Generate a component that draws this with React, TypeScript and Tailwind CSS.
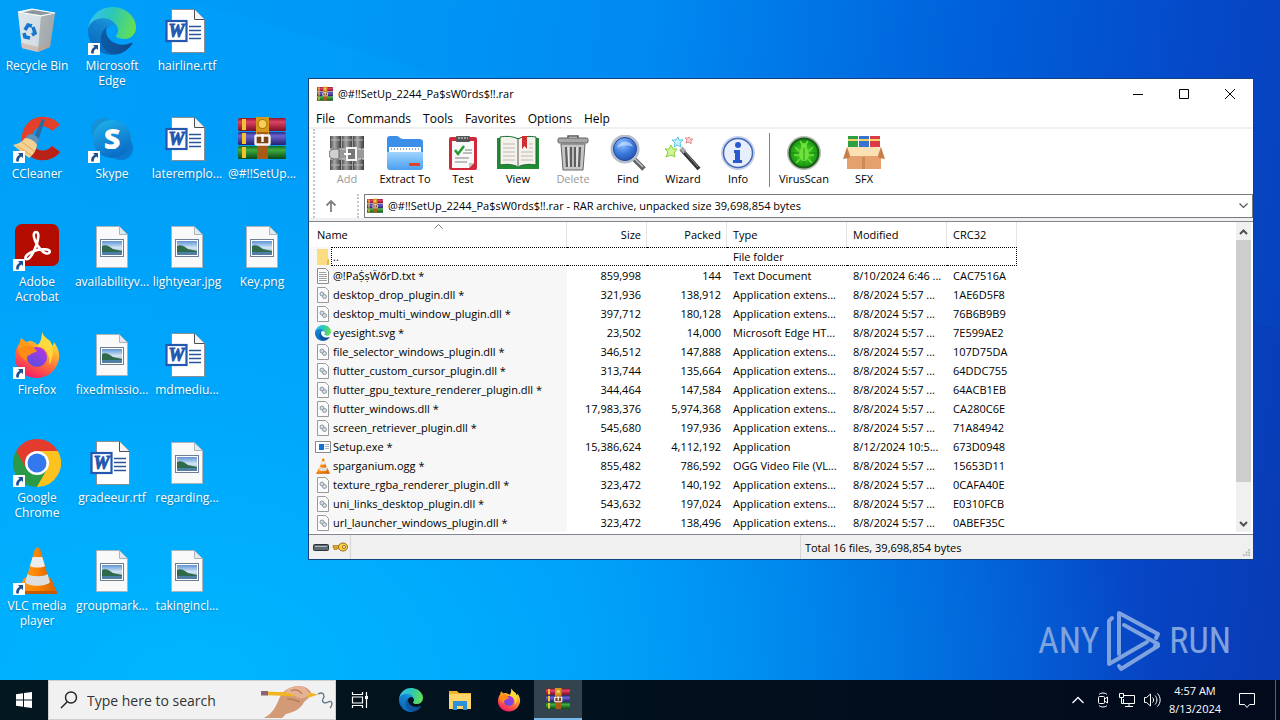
import { useState } from "react";
import type { ReactNode } from "react";

type IconProps = { className?: string };

// gradients shared by the icons below
function Gradients() {
  return (
    <svg className="absolute size-0" aria-hidden="true">
      <defs>
        <linearGradient id="edge-dark" x1="0.2" y1="0.5" x2="1" y2="0.5">
          <stop offset="0" stopColor="#0c59a4" />
          <stop offset="1" stopColor="#114a8b" />
        </linearGradient>
        <linearGradient id="edge-mid" x1="0.8" y1="0" x2="0.3" y2="1">
          <stop offset="0" stopColor="#1b9de2" />
          <stop offset="0.4" stopColor="#1482cf" />
          <stop offset="1" stopColor="#0767bb" />
        </linearGradient>
        <linearGradient id="edge-top" x1="0" y1="0.4" x2="1" y2="0.6">
          <stop offset="0" stopColor="#35c1f1" />
          <stop offset="0.45" stopColor="#2cc7b8" />
          <stop offset="1" stopColor="#66e04f" />
        </linearGradient>
        <linearGradient id="fox-body" x1="0.8" y1="0" x2="0.3" y2="1">
          <stop offset="0" stopColor="#fff44f" />
          <stop offset="0.3" stopColor="#ffbd30" />
          <stop offset="0.6" stopColor="#ff7139" />
          <stop offset="1" stopColor="#f5156c" />
        </linearGradient>
        <linearGradient id="fox-globe" x1="0.8" y1="0" x2="0.3" y2="1">
          <stop offset="0" stopColor="#b833e1" />
          <stop offset="1" stopColor="#5b4fe0" />
        </linearGradient>
        <linearGradient id="cone" x1="0" y1="0" x2="1" y2="0">
          <stop offset="0" stopColor="#ff9a1f" />
          <stop offset="0.5" stopColor="#fb8400" />
          <stop offset="1" stopColor="#d96200" />
        </linearGradient>
        <linearGradient id="book-red" x1="0" y1="0" x2="0" y2="1">
          <stop offset="0" stopColor="#8e1530" />
          <stop offset="0.3" stopColor="#e04464" />
          <stop offset="1" stopColor="#7b0f26" />
        </linearGradient>
        <linearGradient id="book-blue" x1="0" y1="0" x2="0" y2="1">
          <stop offset="0" stopColor="#2d2a86" />
          <stop offset="0.3" stopColor="#6a64cf" />
          <stop offset="1" stopColor="#25206d" />
        </linearGradient>
        <linearGradient id="book-green" x1="0" y1="0" x2="0" y2="1">
          <stop offset="0" stopColor="#0f6a28" />
          <stop offset="0.3" stopColor="#3fae3e" />
          <stop offset="1" stopColor="#07491a" />
        </linearGradient>
        <linearGradient id="book-gray" x1="0" y1="0" x2="1" y2="0">
          <stop offset="0" stopColor="#4a4a4a" />
          <stop offset="0.4" stopColor="#a8a8a8" />
          <stop offset="1" stopColor="#3c3c3c" />
        </linearGradient>
        <linearGradient id="folder-blue" x1="0" y1="0" x2="0" y2="1">
          <stop offset="0" stopColor="#9fd4fd" />
          <stop offset="1" stopColor="#4a9ff0" />
        </linearGradient>
        <radialGradient id="lens" cx="0.4" cy="0.3" r="0.8">
          <stop offset="0" stopColor="#8fc2ff" />
          <stop offset="0.5" stopColor="#3a78dc" />
          <stop offset="1" stopColor="#1b3f9c" />
        </radialGradient>
        <radialGradient id="virus" cx="0.5" cy="0.5" r="0.5">
          <stop offset="0" stopColor="#5fe030" />
          <stop offset="1" stopColor="#179a10" />
        </radialGradient>
        <linearGradient id="skype" x1="0" y1="0" x2="0.4" y2="1">
          <stop offset="0" stopColor="#1fb4ec" />
          <stop offset="1" stopColor="#0a6fc9" />
        </linearGradient>
        <linearGradient id="bin" x1="0" y1="0" x2="1" y2="0.3">
          <stop offset="0" stopColor="#dfe9f0" />
          <stop offset="0.6" stopColor="#c3ccd3" />
          <stop offset="1" stopColor="#9ba6ae" />
        </linearGradient>
        <linearGradient id="photo" x1="0" y1="0" x2="0" y2="1">
          <stop offset="0" stopColor="#5f94d6" />
          <stop offset="0.5" stopColor="#d5e8f5" />
          <stop offset="1" stopColor="#5d87ad" />
        </linearGradient>
      </defs>
    </svg>
  );
}

function RecycleBin({ className }: IconProps) {
  return (
    <svg viewBox="0 0 48 48" className={className}>
      <path d="M5 5 19 2l23 4-5 34-12 5-16-4z" fill="url(#bin)" />
      <path d="M5 5 28 9l-3 36-16-4z" fill="#dbe5ec" opacity="0.7" />
      <path d="M28 9 42 6l-5 34-12 5z" fill="#a4a9ad" opacity="0.7" />
      <path d="M9 6 20 3l19 3-11 2z" fill="#8b979f" />
      <path d="M5 5 19 2l23 4-14 3z" fill="none" stroke="#fff" strokeWidth="1.200" />
      <path d="m9 36 16 4 12-4-1 4-11 5-16-4z" fill="#c9a08a" opacity="0.5" />
      <g fill="none" stroke="#1677cf" strokeWidth="3.600">
        <path d="m12 23 3-5 4 1" />
        <path d="m20 20 2 6-3 2" />
        <path d="m17 31-5-1-1-4" />
      </g>
    </svg>
  );
}

function EdgeIcon({ className }: IconProps) {
  return (
    <svg viewBox="0 0 256 256" className={className}>
      <g transform="translate(-4.6 -5)">
        <path
          fill="url(#edge-dark)"
          d="M235.7 195.5a93.7 93.7 0 0 1-10.6 4.7 101.9 101.9 0 0 1-35.9 6.4c-47.3 0-88.5-32.5-88.5-74.3a31.5 31.5 0 0 1 16.4-27.3c-42.8 1.8-53.8 46.4-53.8 72.5 0 74 68.1 81.4 82.8 81.4 7.9 0 19.8-2.3 27-4.6l1.3-.4a128.3 128.3 0 0 0 66.6-52.8 4 4 0 0 0-5.3-5.6Z"
        />
        <path
          fill="url(#edge-mid)"
          d="M110.3 246.3A79.2 79.2 0 0 1 87.6 225a80.7 80.7 0 0 1 29.5-120c3.2-1.5 8.5-4.1 15.6-4a32.4 32.4 0 0 1 25.7 13 31.9 31.9 0 0 1 6.3 18.7c0-.2 24.5-79.6-80-79.6-43.9 0-80 41.6-80 78.2a130.2 130.2 0 0 0 12.1 56 128 128 0 0 0 156.4 67 75.5 75.5 0 0 1-62.8-8Z"
        />
        <path
          fill="url(#edge-top)"
          d="M156.9 153.8c-.9 1-3.4 2.5-3.4 5.6 0 2.6 1.7 5.2 4.8 7.3 14.3 10 41.4 8.6 41.5 8.6a59.6 59.6 0 0 0 30.3-8.3 61.4 61.4 0 0 0 30.4-52.9c.3-22.4-8-37.3-11.3-43.9C228 28.8 182.3 5 132.6 5a128 128 0 0 0-128 126.2c.5-36.5 36.8-66 80-66 3.5 0 23.5.3 42 10 16.3 8.6 24.9 19 30.8 29.3 6.2 10.7 7.3 24.1 7.3 29.5s-2.7 13.3-7.8 19.9Z"
        />
      </g>
    </svg>
  );
}

function WordDoc({ className }: IconProps) {
  return (
    <svg viewBox="0 0 48 48" className={className}>
      <path d="M8.500 2.500h23l10 10v33h-33z" fill="#fff" stroke="#8a8f96" />
      <path d="M31.500 2.500v10h10" fill="#f3f3f3" stroke="#4b4f55" />
      <path d="M26 19.500h12M26 23.500h12M26 27.500h12M26 31.500h12" stroke="#2b579a" strokeWidth="1.300" />
      <rect x="3.500" y="14" width="20" height="20" fill="#fff" stroke="#2457b0" strokeWidth="2.200" />
      <text
        x="13.500"
        y="30"
        textAnchor="middle"
        fontSize="18"
        fontWeight="700"
        fontStyle="italic"
        fontFamily="Liberation Serif, serif"
        fill="#2457b0"
        stroke="#2457b0"
        strokeWidth="1"
      >
        W
      </text>
    </svg>
  );
}

function ImageDoc({ className }: IconProps) {
  return (
    <svg viewBox="0 0 48 48" className={className}>
      <path d="M8.500 3.500h23l8 8v33h-31z" fill="#f9f9f9" stroke="#a9b4bc" />
      <path d="M31.500 3.500v8h8z" fill="#dfe9f0" stroke="#a9b4bc" />
      <rect x="12.500" y="16.500" width="23" height="17" fill="#fff" stroke="#6d7f90" />
      <rect x="14" y="18" width="20" height="14" fill="url(#photo)" />
      <path d="M14 23c4-2 8 1 11 3l9 2v1H14z" fill="#2f6a4d" />
      <path d="M14 29h20v3H14z" fill="#4f7fa5" />
    </svg>
  );
}

function CCleaner({ className }: IconProps) {
  return (
    <svg viewBox="0 0 48 48" className={className}>
      <path
        d="M47 10C40 1 26-1 17 6 6 15 6 33 17 41c9 7 23 5 30-4l-8-6c-4 5-10 6-15 3-7-5-7-15-1-20 5-4 12-3 16 2z"
        fill="#e2402b"
      />
      <path d="M47 37c-7 9-21 11-30 4l4-9c6 5 13 5 18-1z" fill="#b92317" />
      <path d="m29 4 3 1-7 21-5-2z" fill="#2c6ca0" />
      <path d="M15 20c4-2 10 1 11 6l-3 5-12-6z" fill="#5b93bf" />
      <path d="M12 23c5 0 10 3 12 7-1 6-4 10-8 13L0 30c5-1 9-3 12-7z" fill="#f3d193" />
      <path d="m4 31 14 9M9 27l12 9" stroke="#dba75f" strokeWidth="1" />
    </svg>
  );
}

function SkypeIcon({ className }: IconProps) {
  return (
    <svg viewBox="0 0 48 48" className={className}>
      <circle cx="15" cy="15" r="12" fill="#1691d8" />
      <circle cx="33" cy="33" r="12" fill="#0b79cf" />
      <circle cx="24" cy="24" r="19" fill="url(#skype)" />
      <text x="24" y="34" textAnchor="middle" fontSize="29" fontWeight="800" fontFamily="Open Sans, sans-serif" fill="#fff">
        S
      </text>
    </svg>
  );
}

function WinRar({ className }: IconProps) {
  return (
    <svg viewBox="0 0 48 48" className={className}>
      <rect x="0" y="3" width="48" height="13" rx="1.500" fill="url(#book-red)" />
      <rect x="0" y="17" width="48" height="13" rx="1.500" fill="url(#book-blue)" />
      <rect x="0" y="31" width="48" height="13" rx="1.500" fill="url(#book-green)" />
      <path d="M4 4h4v11H4zM4 18h4v11H4zM4 32h4v11H4z" fill="#f2c230" />
      <rect x="18" y="2" width="13" height="18" fill="#d99a1c" />
      <circle cx="24.500" cy="9" r="4.500" fill="#f6cf57" stroke="#a86a0c" />
      <rect x="19" y="17" width="11" height="27" fill="#a85a17" />
      <rect x="17.500" y="20.500" width="14" height="9" rx="1" fill="#7a4412" stroke="#f4f4f4" strokeWidth="2.400" />
      <path d="M24.500 19v8" stroke="#fff" strokeWidth="2.400" />
    </svg>
  );
}

function AcrobatIcon({ className }: IconProps) {
  return (
    <svg viewBox="0 0 48 48" className={className}>
      <rect x="2" y="1" width="44" height="42" rx="7" fill="#b30b00" />
      <path
        d="M23 9c-4 0-2 9 2 14 3 5 8 9 11 7 4-4-8-5-15-2-6 2-10 6-8 8 3 2 8-7 10-13 2-5 4-14 0-14z"
        fill="none"
        stroke="#fff"
        strokeWidth="2.600"
      />
    </svg>
  );
}

function FirefoxIcon({ className }: IconProps) {
  return (
    <svg viewBox="0 0 48 48" className={className}>
      <path
        d="M29 1c1 4 4 6 8 9 1 2 2 4 3 5l1-4c4 6 6 11 5 17-2 11-11 19-22 19C12 47 2 38 2 26c0-6 2-11 5-14l1-5 5 4c2-1 4-1 5-1 3 1 5 2 7 4 3-2 4-8 4-13z"
        fill="url(#fox-body)"
      />
      <circle cx="24" cy="26" r="10" fill="url(#fox-globe)" />
      <path d="M5 19c4-5 9-6 14-4l5 5c-2 2-6 2-7 4-3 0-4 3-3 6-5-2-8-6-9-11z" fill="#ff8a16" />
      <path d="M29 1c1 4 4 6 8 9 4 7 4 17-1 24 1-7-1-14-6-17l-6-2c4-3 5-9 5-14z" fill="#ffdc3e" opacity="0.9" />
      <path d="m8 7 5 4 6 4c-5-1-10 0-14 4z" fill="#ff9a1a" />
    </svg>
  );
}

function ChromeIcon({ className }: IconProps) {
  return (
    <svg viewBox="0 0 48 48" className={className}>
      <path d="M24 24 3.200 12A24 24 0 0 1 44.800 12z" fill="#e33b2e" />
      <path d="M24 24 44.800 12A24 24 0 0 1 24 48z" fill="#fcc31e" />
      <path d="M24 24v24A24 24 0 0 1 3.200 12z" fill="#2b9a48" />
      <path d="M24 12h20.800L34.400 30z" fill="#fcc31e" />
      <path d="M34.400 30 24 48 15 28z" fill="#2b9a48" />
      <path d="M34.400 30 24 48h2l12-18z" fill="#fcc31e" />
      <path d="M13.600 30 3.200 12 24 13z" fill="#e33b2e" />
      <circle cx="24" cy="24" r="12" fill="#fff" />
      <circle cx="24" cy="24" r="9.500" fill="#3478ed" />
    </svg>
  );
}

function VlcIcon({ className }: IconProps) {
  return (
    <svg viewBox="0 0 48 48" className={className}>
      <path d="M11 31h27l6 15H4z" fill="url(#cone)" />
      <path d="M4 44h40v3H4z" fill="#c75a00" />
      <path d="M22 2c1-2 4-2 5 0l10 34c-3 5-22 5-25 0z" fill="url(#cone)" />
      <path d="M19.600 10h9.700l2.700 9c-3 2-12 2-15 0z" fill="#ececec" />
      <path d="M14.500 27c4 3 16 3 20 0l2.500 8c-3 5-22 5-25 0z" fill="#dedede" />
    </svg>
  );
}

function Shortcut() {
  return (
    <svg viewBox="0 0 12 12" className="absolute bottom-0 left-0 size-3">
      <path d="M0 0h12v12H0z" fill="#fff" />
      <path d="M5 2h5v5L8.300 5.400C6.300 6.500 5.600 8 5.800 10.500H3.300C2.600 7.500 4 5 6.600 3.700z" fill="#1d4f91" />
    </svg>
  );
}

type DesktopItem = { label: string; icon: (props: IconProps) => ReactNode; link?: boolean };

const desktop: (DesktopItem | null)[][] = [
  [
    { label: "Recycle Bin", icon: RecycleBin },
    { label: "CCleaner", icon: CCleaner, link: true },
    { label: "Adobe Acrobat", icon: AcrobatIcon, link: true },
    { label: "Firefox", icon: FirefoxIcon, link: true },
    { label: "Google Chrome", icon: ChromeIcon, link: true },
    { label: "VLC media player", icon: VlcIcon, link: true },
  ],
  [
    { label: "Microsoft Edge", icon: EdgeIcon, link: true },
    { label: "Skype", icon: SkypeIcon, link: true },
    { label: "availabilityv...", icon: ImageDoc },
    { label: "fixedmissio...", icon: ImageDoc },
    { label: "gradeeur.rtf", icon: WordDoc },
    { label: "groupmark...", icon: ImageDoc },
  ],
  [
    { label: "hairline.rtf", icon: WordDoc },
    { label: "lateremplo...", icon: WordDoc },
    { label: "lightyear.jpg", icon: ImageDoc },
    { label: "mdmediu...", icon: WordDoc },
    { label: "regarding...", icon: ImageDoc },
    { label: "takingincl...", icon: ImageDoc },
  ],
  [null, { label: "@#!!SetUp...", icon: WinRar }, { label: "Key.png", icon: ImageDoc }],
];

function DesktopIcons() {
  return (
    <div className="flex">
      {desktop.map((column, i) => (
        <div key={i} className="flex w-[75px] flex-col pr-px">
          {column.map((item, j) =>
            item ? (
              <button
                key={item.label}
                className="flex h-[108px] flex-col items-center gap-[3px] pt-[7px] text-[12px] leading-[15px] text-white"
              >
                <span className="relative size-12">
                  <item.icon className="size-12" />
                  {item.link && <Shortcut />}
                </span>
                <span className="px-1 text-center [text-shadow:0_1px_2px_#00000055]">{item.label}</span>
              </button>
            ) : (
              <div key={j} className="h-[108px]" />
            ),
          )}
        </div>
      ))}
    </div>
  );
}

/* toolbar icons */

const AddIcon = () => (
  <svg viewBox="0 0 36 36" className="size-9">
    <path d="M1 1h11v34H1z" fill="url(#book-gray)" />
    <path d="M12.500 1h11v34h-11z" fill="url(#book-gray)" />
    <path d="M24 1h11v34H24z" fill="url(#book-gray)" />
    <path d="M2 5h9M13 5h10M25 5h9M2 30h9M13 30h10M25 30h9" stroke="#b8b8b8" strokeWidth="1.200" />
    <path d="M1 14h34v10H1z" fill="#9a9a9a" />
    <path d="M1 14h34M1 24h34" stroke="#e0e0e0" strokeDasharray="3 1" />
    <path d="M5 14a5 5 0 0 0 0 10h5V14z" fill="#cfcfcf" stroke="#666" />
    <rect x="18" y="13" width="9" height="12" fill="#777" stroke="#f5f5f5" strokeWidth="2" />
    <path d="M15 19h7" stroke="#fff" strokeWidth="2" />
  </svg>
);

const ExtractIcon = () => (
  <svg viewBox="0 0 38 36" className="h-9 w-[38px]">
    <path d="M1 4c0-2 1-3 3-3h7c2 0 3 3 6 3h16c3 0 4 1 4 3v22H1z" fill="#3c8fe8" />
    <path d="M3 12h32v10H3z" fill="#fff" />
    <path d="M5 14h29" stroke="#8aa9c8" strokeWidth="2" strokeDasharray="1 2" />
    <path d="M1 17h36v15c0 2-1 3-3 3H4c-2 0-3-1-3-3z" fill="url(#folder-blue)" />
    <rect x="23" y="28" width="11" height="3" rx="1" fill="#e0402c" />
  </svg>
);

const TestIcon = () => (
  <svg viewBox="0 0 30 36" className="h-9 w-[30px]">
    <rect x="1" y="2" width="28" height="33" rx="2" fill="#d3283a" />
    <path d="M4 6h22v22l-5 5H4z" fill="#f8f8f8" />
    <path d="m21 33 5-5h-5z" fill="#c4c4c4" />
    <rect x="8" y="1" width="14" height="6" rx="1" fill="#555" />
    <path d="M10 3h10" stroke="#eee" strokeDasharray="2 1" />
    <path d="m7 15 3 4 6-8" fill="none" stroke="#239a32" strokeWidth="2.500" />
    <path d="M17 15h7M15 18h9M7 23h14M7 27h12" stroke="#a8a8a8" strokeWidth="1.300" />
  </svg>
);

const ViewIcon = () => (
  <svg viewBox="0 0 42 36" className="h-9 w-[42px]">
    <path d="M0 3h42v31H0z" fill="#208a35" />
    <path d="M3 2c6-1 13-1 18 2 5-3 12-3 18-2v28c-6-1-13-1-18 2-5-3-12-3-18-2z" fill="#f5f2ec" stroke="#14692a" />
    <path d="M21 4v28" stroke="#8b8b8b" strokeWidth="1.500" />
    <path d="M6 9h12M6 13h12M6 17h12M6 21h12M6 25h12M24 17h12M24 21h12M24 25h12M32 9h4M32 13h4" stroke="#bdbab5" />
    <path d="M25 1h5v13l-2.500-3-2.500 3z" fill="#d12f2f" />
  </svg>
);

const DeleteIcon = () => (
  <svg viewBox="0 0 32 36" className="h-9 w-8">
    <path d="M11 3V1h10v2" fill="none" stroke="#555" strokeWidth="1.500" />
    <rect x="1" y="3" width="30" height="5" rx="1.500" fill="#a8a8a8" stroke="#5c5c5c" />
    <path d="M4 9h24l-2 26H6z" fill="#c6c6c6" stroke="#666" />
    <path d="m9 12 1 20M14 12v20M18 12v20M23 12l-1 20" stroke="#5e5e5e" strokeWidth="2.200" />
    <path d="m11 12 1 20M20 12v20" stroke="#f3f3f3" />
  </svg>
);

const FindIcon = () => (
  <svg viewBox="0 0 36 36" className="size-9">
    <path d="m24 24 10 10" stroke="#606468" strokeWidth="5" />
    <path d="m24 23 9 9" stroke="#c0c4c8" strokeWidth="1.500" />
    <circle cx="15" cy="14" r="13" fill="url(#lens)" stroke="#b4bdc9" strokeWidth="3" />
    <circle cx="15" cy="14" r="11.500" fill="none" stroke="#234a9f" />
    <path d="M7 13c2-7 13-9 16-1-4-2-11-2-16 1z" fill="#cfe4ff" opacity="0.6" />
  </svg>
);

const WizardIcon = () => (
  <svg viewBox="0 0 36 36" className="size-9">
    <path d="m16 14 18 20" stroke="#333" strokeWidth="4" />
    <path d="m16 13 4 4" stroke="#aaa" strokeWidth="4" />
    <path d="m19 16 14 16" stroke="#888" />
    <path d="m6 10 2 4h4l-3 4 1 4-4-2-5 2 2-5-3-3h4z" fill="#d2f59a" stroke="#84cf38" />
    <path d="m13 2 1 3h4l-3 3 1 4-4-2-3 2 1-4-3-3h4z" fill="#c5f0fb" stroke="#58c8e6" />
    <path d="m24 2 1 2h3l-2 2v3l-2-2-3 1 1-3-2-2h3z" fill="#fbd5d5" stroke="#ea8d8d" />
  </svg>
);

const InfoIcon = () => (
  <svg viewBox="0 0 36 36" className="size-9">
    <circle cx="18" cy="18" r="17" fill="#c3d0e8" />
    <circle cx="18" cy="18" r="14.500" fill="#e7effc" stroke="#4468b8" strokeWidth="1.500" />
    <circle cx="18" cy="10" r="3" fill="#2a5ad0" />
    <path d="M14 15h6v10h2v3h-9v-3h2v-7h-1z" fill="#2a5ad0" />
  </svg>
);

const VirusIcon = () => (
  <svg viewBox="0 0 36 36" className="size-9">
    <circle cx="18" cy="18" r="17" fill="#b4bdb4" />
    <circle cx="18" cy="18" r="15.500" fill="#1e5c1a" />
    <circle cx="18" cy="18" r="13.500" fill="url(#virus)" />
    <path d="M18 5v26M5 18h26" stroke="#168a10" />
    <ellipse cx="18" cy="19" rx="5" ry="7" fill="#6fe03c" />
    <circle cx="18" cy="11" r="3" fill="#6fe03c" />
    <path
      d="m13 16-4-4M23 16l4-4M13 20H8M23 20h5M14 24l-4 4M22 24l4 4M16 9l-2-3M20 9l2-3"
      stroke="#6fe03c"
      strokeWidth="1.500"
    />
    <path d="M18 13v12" stroke="#279c1c" />
  </svg>
);

const SfxIcon = () => (
  <svg viewBox="0 0 42 36" className="h-9 w-[42px]">
    <path d="M5 1h10v14H5z" fill="#2da043" />
    <path d="M16 1h10v14H16z" fill="#3674cf" />
    <path d="M27 1h10v14H27z" fill="#db3b44" />
    <path d="M5 5h10M16 5h10M27 5h10" stroke="#f3d469" strokeWidth="2" />
    <path d="M4 12h34v22H4z" fill="#e4a06d" />
    <path d="M4 12h34l-3 9H7z" fill="#fbe0b3" />
    <path d="M4 12 0 24l6-1 1-2zM38 12l4 12-6-1-1-2z" fill="#c97f4c" />
    <path d="M19 22h3v12h-3z" fill="#cf8a59" />
  </svg>
);

const tools = [
  { label: "Add", icon: <AddIcon />, width: "w-14", disabled: true },
  { label: "Extract To", icon: <ExtractIcon />, width: "w-[60px]" },
  { label: "Test", icon: <TestIcon />, width: "w-14" },
  { label: "View", icon: <ViewIcon />, width: "w-[54px]" },
  { label: "Delete", icon: <DeleteIcon />, width: "w-14", disabled: true },
  { label: "Find", icon: <FindIcon />, width: "w-[54px]" },
  { label: "Wizard", icon: <WizardIcon />, width: "w-14" },
  { label: "Info", icon: <InfoIcon />, width: "w-[54px]" },
  { label: "VirusScan", icon: <VirusIcon />, width: "w-[60px]", group: true },
  { label: "SFX", icon: <SfxIcon />, width: "w-[60px]" },
];

/* file list icons */

const FolderIcon = () => (
  <svg viewBox="0 0 16 16" className="size-4">
    <path d="M2 0h11v10h1v6H2z" fill="#fbdc80" />
    <path d="M13 10h1v6h-2v-4z" fill="#e8b84a" />
  </svg>
);

const TextFile = () => (
  <svg viewBox="0 0 16 16" className="size-4">
    <path d="M2.500 0.500h8l3 3v12h-11z" fill="#fff" stroke="#8c8c8c" />
    <path d="M4 4.500h7M4 6.500h8M4 8.500h8M4 10.500h8M4 12.500h8" stroke="#a0a0a0" />
  </svg>
);

const DllFile = () => (
  <svg viewBox="0 0 16 16" className="size-4">
    <path d="M2.500 0.500h8l3 3v12h-11z" fill="#fbfbfb" stroke="#9a9a9a" />
    <circle cx="7" cy="7" r="2" fill="#d5dce2" stroke="#8a97a3" />
    <circle cx="9.500" cy="9.500" r="2" fill="#d5dce2" stroke="#8a97a3" />
  </svg>
);

const ExeFile = () => (
  <svg viewBox="0 0 16 16" className="size-4">
    <path d="M0.500 2.500h15v11H.5z" fill="#fff" stroke="#8a8a8a" />
    <path d="M4 5h5v6H4z" fill="#1173d4" />
    <path d="M10 5.500h4M10 7.500h4M10 9.500h4" stroke="#9db6d1" />
  </svg>
);

const icons = {
  folder: <FolderIcon />,
  txt: <TextFile />,
  dll: <DllFile />,
  exe: <ExeFile />,
  svg: <EdgeIcon className="size-4" />,
  ogg: <VlcIcon className="size-4" />,
};

type FileRow = [keyof typeof icons, string, string, string, string, string, string];

const files: FileRow[] = [
  ["txt", "@!PaṨṣẄőrD.txt *", "859,998", "144", "Text Document", "8/10/2024 6:46 ...", "CAC7516A"],
  ["dll", "desktop_drop_plugin.dll *", "321,936", "138,912", "Application extens...", "8/8/2024 5:57 ...", "1AE6D5F8"],
  ["dll", "desktop_multi_window_plugin.dll *", "397,712", "180,128", "Application extens...", "8/8/2024 5:57 ...", "76B6B9B9"],
  ["svg", "eyesight.svg *", "23,502", "14,000", "Microsoft Edge HT...", "8/8/2024 5:57 ...", "7E599AE2"],
  ["dll", "file_selector_windows_plugin.dll *", "346,512", "147,888", "Application extens...", "8/8/2024 5:57 ...", "107D75DA"],
  ["dll", "flutter_custom_cursor_plugin.dll *", "313,744", "135,664", "Application extens...", "8/8/2024 5:57 ...", "64DDC755"],
  ["dll", "flutter_gpu_texture_renderer_plugin.dll *", "344,464", "147,584", "Application extens...", "8/8/2024 5:57 ...", "64ACB1EB"],
  ["dll", "flutter_windows.dll *", "17,983,376", "5,974,368", "Application extens...", "8/8/2024 5:57 ...", "CA280C6E"],
  ["dll", "screen_retriever_plugin.dll *", "545,680", "197,936", "Application extens...", "8/8/2024 5:57 ...", "71A84942"],
  ["exe", "Setup.exe *", "15,386,624", "4,112,192", "Application", "8/12/2024 10:5...", "673D0948"],
  ["ogg", "sparganium.ogg *", "855,482", "786,592", "OGG Video File (VL...", "8/8/2024 5:57 ...", "15653D11"],
  ["dll", "texture_rgba_renderer_plugin.dll *", "323,472", "140,192", "Application extens...", "8/8/2024 5:57 ...", "0CAFA40E"],
  ["dll", "uni_links_desktop_plugin.dll *", "543,632", "197,024", "Application extens...", "8/8/2024 5:57 ...", "E0310FCB"],
  ["dll", "url_launcher_windows_plugin.dll *", "323,472", "138,496", "Application extens...", "8/8/2024 5:57 ...", "0ABEF35C"],
];

const headers = [
  { label: "Name", style: "w-[257px] pl-[7px] text-left" },
  { label: "Size", style: "w-20 pr-[5px] text-right" },
  { label: "Packed", style: "w-20 pr-[5px] text-right" },
  { label: "Type", style: "w-[120px] pl-[6px] text-left" },
  { label: "Modified", style: "w-[100px] pl-[6px] text-left" },
  { label: "CRC32", style: "w-[70px] pl-[6px] text-left" },
];

function FileList() {
  return (
    <div className="flex justify-between border-y border-[#828790] bg-white pb-[2px] pl-px">
      <table className="w-[707px] table-fixed border-separate border-spacing-0 whitespace-nowrap">
        <thead>
          <tr className="h-[25px]">
            {headers.map(({ label, style }) => (
              <th key={label} className={`relative border-r border-[#e5e5e5] pt-px pb-0 font-normal ${style}`}>
                {label}
                {label === "Name" && (
                  <svg viewBox="0 0 9 5" className="absolute inset-x-0 top-[2px] mx-auto h-[5px] w-[9px]">
                    <path d="m.5 4.500 4-4 4 4" fill="none" stroke="#777" />
                  </svg>
                )}
              </th>
            ))}
          </tr>
        </thead>
        <tbody className="leading-[17px]">
          <tr className="h-[19px]">
            <td className="bg-[#f7f7f7] p-0">
              <div className="flex items-center pl-[5px]">
                {icons.folder}
                <span className="h-[19px] flex-1 border-y border-l border-dotted border-black bg-white pl-px">..</span>
              </div>
            </td>
            <td className="border-y border-dotted border-black p-0" />
            <td className="border-y border-dotted border-black p-0" />
            <td className="border-y border-dotted border-black py-0 pl-[6px]">File folder</td>
            <td className="border-y border-dotted border-black p-0" />
            <td className="border-y border-r border-dotted border-black p-0" />
          </tr>
          {files.map(([kind, name, size, packed, type, modified, crc]) => (
            <tr key={name} className="h-[19px]">
              <td className="bg-[#f7f7f7] p-0">
                <div className="flex items-center gap-[2px] pl-[5px]">
                  {icons[kind]}
                  <span>{name}</span>
                </div>
              </td>
              <td className="py-0 pr-[6px] text-right">{size}</td>
              <td className="py-0 pr-[6px] text-right">{packed}</td>
              <td className="py-0 pl-[6px]">{type}</td>
              <td className="py-0 pl-[6px]">{modified}</td>
              <td className="py-0 pl-[6px]">{crc}</td>
            </tr>
          ))}
        </tbody>
      </table>
      <div className="mr-[2px] flex w-[15px] flex-col bg-[#f0f0f0] pt-px">
        <button aria-label="Scroll up" className="flex h-[17px] items-center justify-center">
          <svg viewBox="0 0 9 6" className="h-[6px] w-[9px]">
            <path d="m1 5 3.500-3.500L8 5" fill="none" stroke="#505050" strokeWidth="2" />
          </svg>
        </button>
        <div className="flex-1">
          <div className="h-[88%] bg-[#cdcdcd]" />
        </div>
        <button aria-label="Scroll down" className="flex h-[17px] items-center justify-center">
          <svg viewBox="0 0 9 6" className="h-[6px] w-[9px]">
            <path d="m1 1 3.500 3.500L8 1" fill="none" stroke="#505050" strokeWidth="2" />
          </svg>
        </button>
      </div>
    </div>
  );
}

function ArchiveWindow() {
  return (
    <div className="absolute top-[78px] right-[26px] left-[308px] border border-[#12437c] bg-white text-[11px] text-black">
      <div className="flex h-[30px] items-center">
        <WinRar className="ml-2 size-4" />
        <span className="ml-[5px] flex-1">@#!!SetUp_2244_Pa$sW0rds$!!.rar</span>
        <button aria-label="Minimize" className="flex w-[46px] justify-center">
          <svg viewBox="0 0 10 10" className="size-[10px]">
            <path d="M0 5.500h10" stroke="#000" />
          </svg>
        </button>
        <button aria-label="Maximize" className="flex w-[46px] justify-center">
          <svg viewBox="0 0 10 10" className="size-[10px]">
            <path d="M.5.5h9v9h-9z" fill="none" stroke="#000" />
          </svg>
        </button>
        <button aria-label="Close" className="flex w-[46px] justify-center">
          <svg viewBox="0 0 10 10" className="size-[10px]">
            <path d="m0 0 10 10M10 0 0 10" stroke="#000" />
          </svg>
        </button>
      </div>

      <div className="flex h-5 gap-3 border-b-2 border-[#f0f0f0] pl-[7px] text-[12px] leading-[20px]">
        {["File", "Commands", "Tools", "Favorites", "Options", "Help"].map((item) => (
          <button key={item}>{item}</button>
        ))}
      </div>

      <div className="flex border-b-[3px] border-[#f0f0f0] pl-1">
        <div className="w-[6px] border-l-2 border-dotted border-[#c4c4c4]" />
        <div className="flex-1">
          <div className="flex h-[65px]">
            {tools.map(({ label, icon, width, disabled, group }) => (
              <div key={label} className="flex">
                {group && <div className="mx-1 mt-1 h-[54px] border-l border-[#808080]" />}
                <button
                  disabled={disabled}
                  className={`flex flex-col items-center pt-[6px] leading-[15px] whitespace-nowrap disabled:text-[#9a9a9a] ${width}`}
                >
                  {icon}
                  {label}
                </button>
              </div>
            ))}
          </div>
          <div className="flex h-6">
            <button aria-label="Up one level" className="flex w-6 items-center justify-center">
              <svg viewBox="0 0 12 12" className="size-3">
                <path d="M6 12V1M1.500 5.500 6 1l4.500 4.500" fill="none" stroke="#808080" strokeWidth="1.800" />
              </svg>
            </button>
            <div className="ml-[14px] w-[7px] border-l-2 border-dotted border-[#c4c4c4]" />
            <div className="relative flex flex-1 items-center border border-[#7a7a7a] pl-[2px]">
              <WinRar className="size-4" />
              <select aria-label="Archive path" className="flex-1 appearance-none bg-white pl-[5px] outline-none">
                <option>@#!!SetUp_2244_Pa$sW0rds$!!.rar - RAR archive, unpacked size 39,698,854 bytes</option>
              </select>
              <svg viewBox="0 0 9 6" className="pointer-events-none absolute right-1 h-[6px] w-[9px]">
                <path d="m.5.5 4 4 4-4" fill="none" stroke="#555" strokeWidth="1.200" />
              </svg>
            </div>
          </div>
        </div>
      </div>

      <FileList />

      <div className="flex h-6 bg-[#f0f0f0]">
        <div className="flex w-[42px] items-center gap-[3px] border-r border-[#d7d7d7] pl-1">
          <svg viewBox="0 0 16 16" className="size-4">
            <rect x="0.500" y="5.500" width="15" height="6" rx="1" fill="#5c6a72" stroke="#2c3438" />
            <path d="M2 7.500h12" stroke="#a9b8c0" />
          </svg>
          <svg viewBox="0 0 16 16" className="size-4">
            <path d="M8 6.500H1v2h1v2h3v-1h3z" fill="#e0a428" stroke="#a06a10" strokeWidth="0.600" />
            <ellipse cx="11" cy="8" rx="4.500" ry="4" fill="#f8d04c" stroke="#a06a10" />
            <circle cx="12" cy="8" r="1.500" fill="#fff" stroke="#a06a10" />
          </svg>
        </div>
        <div className="flex-1" />
        <div className="relative w-[48%] border-l border-[#d7d7d7] pl-1 leading-[26px]">
          Total 16 files, 39,698,854 bytes
          <svg viewBox="0 0 10 10" className="absolute right-[2px] bottom-[2px] size-[9px]">
            <path d="M7 1h2v2H7zM7 4h2v2H7zM7 7h2v2H7zM4 4h2v2H4zM4 7h2v2H4zM1 7h2v2H1z" fill="#b8b8b8" />
          </svg>
        </div>
      </div>
    </div>
  );
}

function Watermark() {
  return (
    <div className="absolute right-[49px] bottom-2 flex items-center gap-2 font-['Roboto_Condensed','Roboto',sans-serif] text-[36px] leading-none text-[#7ea3de]">
      <span>ANY</span>
      <svg viewBox="0 0 54 62" className="h-[62px] w-[54px]">
        <g fill="none" stroke="#7ea3de" strokeWidth="4" strokeLinejoin="round" strokeLinecap="round">
          <path d="M12 44V3l39 21-2 4M17 15l34 19-3 2" />
          <path d="M5 8 2 11v43l38-22" />
          <path d="m12 56 2 3 37-23" />
        </g>
      </svg>
      <span>RUN</span>
    </div>
  );
}

function SearchHand() {
  return (
    <svg viewBox="0 0 74 36" className="h-9 w-[74px]">
      <path d="M3 36c8-4 12-11 15-19 3-8 11-13 20-13 7 0 12 4 13 9l-8 7c-3 7-10 10-18 12l-4 4z" fill="#d39a78" />
      <path d="M2 9.500 50 11l7 1.500L50 15 2 13z" fill="#f2b41f" />
      <path d="M0 9h7v4.500H0z" fill="#8d6478" />
      <path d="M24 10c5-6 14-8 20-4l5 6-6 4c-3 1-7 0-10-3z" fill="#e5b393" />
      <path d="M30 9c4-2 8-1 11 3M26 17c5-1 9 2 13 3" fill="none" stroke="#b47653" strokeWidth="1.200" />
      <path d="M57 12c6-3 7 2 5 5s2 5 5 3 6 1 2 6" fill="none" stroke="#5b7480" strokeWidth="1.300" />
    </svg>
  );
}

function ExplorerIcon({ className }: IconProps) {
  return (
    <svg viewBox="0 0 24 24" className={className}>
      <path d="M1 3h8l2 2h12v16H1z" fill="#f0b429" />
      <path d="M1 6h22v15H1z" fill="#fbd568" />
      <path d="M5 13h14v9h-4v-4H9v4H5z" fill="#2f8fd8" />
    </svg>
  );
}

function Taskbar() {
  const [query, setQuery] = useState("");

  return (
    <div className="flex h-10 bg-linear-to-r from-[#03171f] to-[#020a1c] text-white">
      <button aria-label="Start" className="flex w-12 items-center justify-center">
        <svg viewBox="0 0 16 16" className="size-4" fill="#fff">
          <path d="M0 2.200 7 1.200v6.300H0zM8 1l8-1v7.500H8zM0 8.500h7v6.300l-7-1zM8 8.500h8V16l-8-1z" />
        </svg>
      </button>
      <div className="flex w-72 items-center border border-[#cfcfcf] bg-[#f1f1f1] text-[14px] text-[#333]">
        <svg viewBox="0 0 18 18" className="ml-[11px] size-[18px]">
          <path d="m1 17 6-6" stroke="#222" strokeWidth="1.400" />
          <circle cx="11" cy="6.500" r="5.500" fill="none" stroke="#222" strokeWidth="1.400" />
        </svg>
        <input
          aria-label="Search"
          className="ml-[9px] min-w-0 flex-1 outline-none placeholder:text-[#333]"
          placeholder="Type here to search"
          value={query}
          onChange={(e) => setQuery(e.target.value)}
        />
        <SearchHand />
      </div>
      <button aria-label="Task View" className="mr-[3px] flex w-12 items-center justify-center">
        <svg viewBox="0 0 18 18" className="size-[18px]" fill="none" stroke="#fff" strokeWidth="1.200">
          <path d="M1.500 1v2.500h10V1M1.500 17v-2.500h10V17M1.500 6h10v6h-10zM15.500 1v16" />
          <path d="M14 5h3v3h-3z" fill="#fff" stroke="none" />
        </svg>
      </button>
      <div className="flex gap-px">
        <button aria-label="Edge" className="flex w-12 items-center justify-center">
          <EdgeIcon className="size-6" />
        </button>
        <button aria-label="File Explorer" className="flex w-12 items-center justify-center">
          <ExplorerIcon className="size-6" />
        </button>
        <button aria-label="Firefox" className="flex w-12 items-center justify-center">
          <FirefoxIcon className="size-6" />
        </button>
        <button
          aria-label="WinRAR"
          className="flex w-12 items-center justify-center border-b-2 border-[#76b9ed] bg-[#34444e]"
        >
          <WinRar className="size-6" />
        </button>
      </div>

      <div className="ml-auto flex items-center">
        <div className="mr-1 flex items-center gap-[7px]">
          <svg viewBox="0 0 12 8" className="h-2 w-3" fill="none" stroke="#fff" strokeWidth="1.300">
            <path d="m.5 7 5.500-5.500L11.500 7" />
          </svg>
          <svg viewBox="0 0 16 16" className="ml-1 size-4" fill="none" stroke="#fff">
            <rect x="3.500" y="4.500" width="6" height="7" rx="1" />
            <path d="m9.500 7 3-2v6l-3-2M4 2.500C6 .5 10 .5 12 2.500M4 13.500c2 2 6 2 8 0" />
          </svg>
          <svg viewBox="0 0 18 16" className="h-4 w-[18px]" fill="none" stroke="#fff">
            <path d="M6 3.500h10.500v8H5.500V7M11 11.500v3M7 14.500h8M1.500 1.500h4v4h-4zM3.500 5.500v6h2" />
          </svg>
          <svg viewBox="0 0 18 16" className="h-4 w-[18px]" fill="none" stroke="#fff">
            <path d="M1.500 5.500h2l4-3.500v12l-4-3.500h-2zM9.500 5.500c1.500 1.500 1.500 3.500 0 5M12 3.500c2.500 2.500 2.500 6.500 0 9M14.500 1.500c3.500 3.500 3.500 9.500 0 13" />
          </svg>
        </div>
        <div className="w-[60px] text-center text-[11px] leading-[18px]">
          4:57 AM
          <br />
          8/13/2024
        </div>
        <button aria-label="Notifications" className="flex w-11 items-center justify-center">
          <svg viewBox="0 0 16 16" className="size-4" fill="none" stroke="#fff">
            <path d="M.5 1.500h15v11h-5l-2.500 3-2.500-3h-5z" />
          </svg>
        </button>
        <div className="ml-[6px] h-10 w-[5px] border-l border-[#5a6472]" />
      </div>
    </div>
  );
}

export default function App() {
  return (
    <div className="flex min-h-screen flex-col font-['Open_Sans','Noto_Sans',sans-serif]">
      <Gradients />
      <main className="relative flex-1 overflow-hidden bg-[radial-gradient(ellipse_75%_80%_at_15%_100%,#00b6ff_0%,#00b0ff99_45%,#00a8ff00_100%),linear-gradient(97deg,#009ff8_0%,#009df8_25%,#008cf2_48%,#0062da_70%,#0646c6_88%,#083bb4_100%)]">
        <svg viewBox="0 0 1280 680" preserveAspectRatio="none" className="absolute size-full" aria-hidden="true">
          <path d="M190 0 1280 330V0z" fill="#0078ee" opacity="0.08" />
        </svg>
        <div className="relative">
          <DesktopIcons />
        </div>
        <ArchiveWindow />
        <Watermark />
      </main>
      <Taskbar />
    </div>
  );
}
